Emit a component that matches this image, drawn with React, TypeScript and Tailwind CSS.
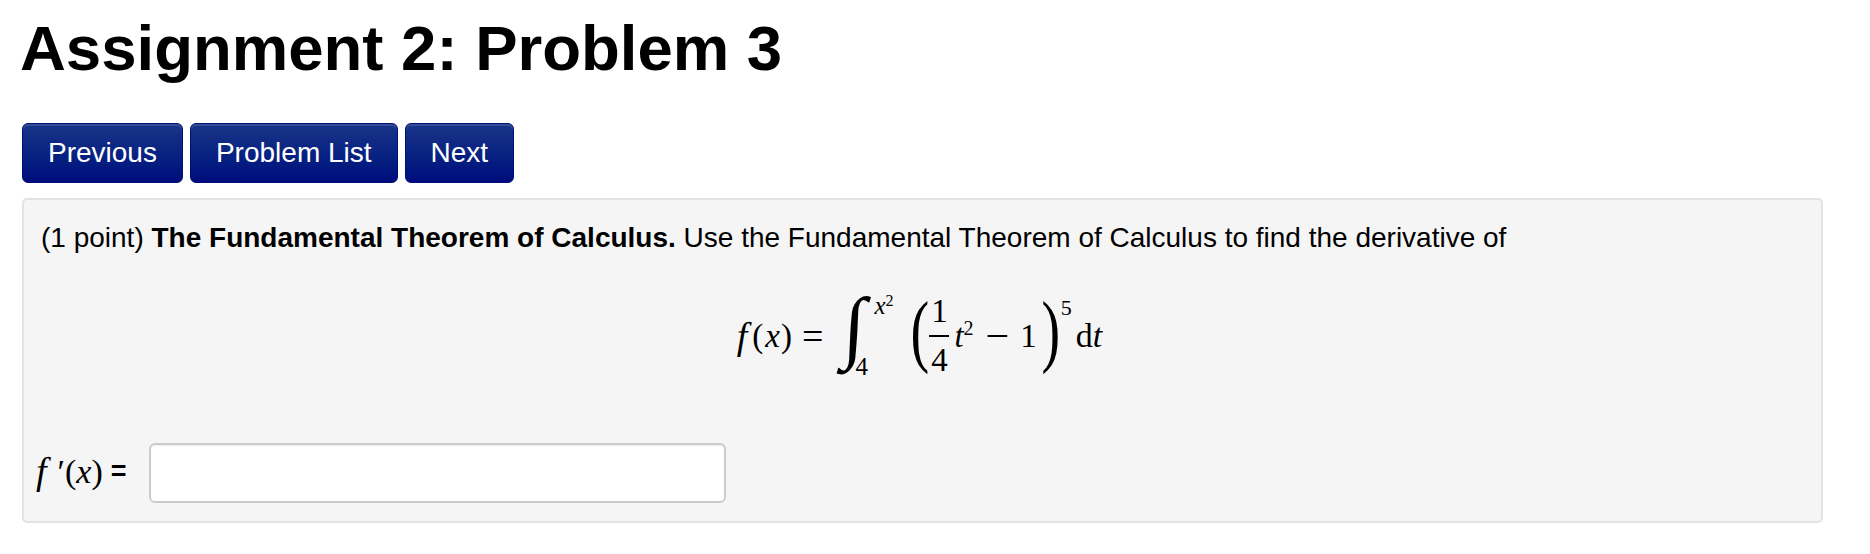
export default function App() {
  return (
    <div className="min-h-[554px] bg-white pl-[22px] pr-[47px] pt-[12px] font-['Liberation_Sans',Arial,sans-serif] text-black">
      <h1 className="-ml-[2px] text-[63.5px] font-bold leading-[72px]">Assignment 2: Problem 3</h1>
      <div className="mt-[39px] flex gap-[7px]">
        {["Previous", "Problem List", "Next"].map((label) => (
          <button
            key={label}
            className="h-[60px] rounded-[6px] border border-[#00107a] bg-gradient-to-b from-[#1a3488] to-[#000a7c] px-[25px] text-[28px] text-white shadow-[inset_0_2px_0_rgba(255,255,255,0.12)]"
          >
            {label}
          </button>
        ))}
      </div>
      <div className="mt-[15px] h-[325px] rounded-[5px] border-2 border-[#e3e3e3] bg-[#f5f5f5] px-[17px] pt-[19px]">
        <p className="text-[28px] leading-[38px]">
          (1 point) <b>The Fundamental Theorem of Calculus.</b> Use the Fundamental Theorem of Calculus to find the derivative of
        </p>
        <div className="mt-[31px] flex h-[96px] items-center justify-center pr-[6px] font-['Liberation_Serif',serif] text-[33px] leading-none">
          <span className="text-[38px] italic">f</span>
          <span className="ml-[5px]">(</span>
          <span className="ml-[2px] italic">x</span>
          <span className="ml-[1px]">)</span>
          <span className="ml-[10px] text-[38px]">=</span>
          <span className="ml-[16px] w-[31px] -translate-y-[10px] -skew-x-[3deg] text-center text-[80px]">∫</span>
          <span className="ml-[4px] flex h-[86px] w-[36px] flex-col justify-between text-[25px]">
            <span className="italic">
              x<sup className="text-[16px] not-italic">2</sup>
            </span>
            <span className="-ml-[19px]">4</span>
          </span>
          <span className="-ml-[2px] w-[16px] -translate-y-[6px] scale-x-[0.7] text-center text-[80px]">(</span>
          <span className="ml-[5px] flex flex-col items-center">
            <span className="mb-[7px]">1</span>
            <span className="h-[2px] w-[20px] bg-black"></span>
            <span className="mt-[7px]">4</span>
          </span>
          <span className="ml-[5px] italic">t</span>
          <span className="-mt-[16px] text-[20px]">2</span>
          <span className="ml-[12px] text-[42px] leading-none">−</span>
          <span className="ml-[11px]">1</span>
          <span className="ml-[2px] w-[16px] -translate-y-[6px] scale-x-[0.7] text-center text-[80px]">)</span>
          <span className="mb-[56px] ml-[6px] text-[22px]">5</span>
          <span className="ml-[4px] text-[34px]">
            d<span className="italic">t</span>
          </span>
        </div>
        <div className="mt-[59px] flex items-center">
          <span className="-ml-[5px] -mt-[3px] flex w-[113px] items-center whitespace-nowrap font-['Liberation_Serif',serif] text-[34px]">
            <span className="text-[38px] italic">f</span>
            <span className="ml-[11px]">′(</span>
            <span className="italic">x</span>
            <span>)</span>
            <span className="ml-[8px] font-['Liberation_Sans',sans-serif] text-[27px] font-bold">=</span>
          </span>
          <input
            aria-label="answer"
            className="h-[60px] w-[577px] rounded-[6px] border-2 border-[#cccccc] bg-white shadow-[inset_0_1px_1px_rgba(0,0,0,0.07)]"
          />
        </div>
      </div>
    </div>
  );
}
